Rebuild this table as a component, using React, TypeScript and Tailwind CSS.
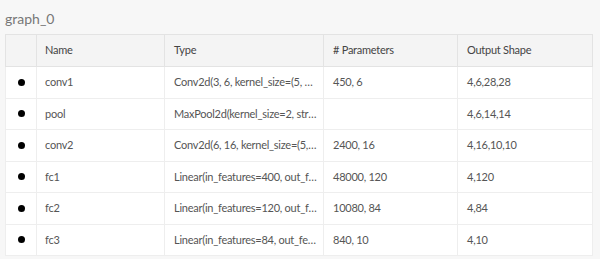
const rows = [
  { name: 'conv1', type: 'Conv2d(3, 6, kernel_size=(5, 5), stride=(1, 1))', params: '450, 6', shape: '4,6,28,28' },
  { name: 'pool', type: 'MaxPool2d(kernel_size=2, stride=2, padding=0, dilation=1, ceil_mode=False)', params: '', shape: '4,6,14,14' },
  { name: 'conv2', type: 'Conv2d(6, 16, kernel_size=(5, 5), stride=(1, 1))', params: '2400, 16', shape: '4,16,10,10' },
  { name: 'fc1', type: 'Linear(in_features=400, out_features=120, bias=True)', params: '48000, 120', shape: '4,120' },
  { name: 'fc2', type: 'Linear(in_features=120, out_features=84, bias=True)', params: '10080, 84', shape: '4,84' },
  { name: 'fc3', type: 'Linear(in_features=84, out_features=10, bias=True)', params: '840, 10', shape: '4,10' },
];

export default function App() {
  return (
    <div className="w-[600px] h-[259px] bg-[#f7f7f7] px-[5px] pt-[9px] overflow-hidden" style={{ fontFamily: 'Lato, "Liberation Sans", sans-serif' }}>
      <h2 className="text-[14px] leading-[20px] text-[#777] mb-[5px]">graph_0</h2>
      <table className="table-fixed w-[588px] border-collapse bg-white border border-[#e3e3e3] text-[11px] tracking-[-0.25px] text-[#555]">
        <colgroup>
          <col className="w-[31px]" />
          <col className="w-[128px]" />
          <col className="w-[159px]" />
          <col className="w-[134px]" />
          <col />
        </colgroup>
        <thead>
          <tr className="h-[32px] bg-[#f4f4f4]">
            <th className="border border-[#e3e3e3]" />
            <th className="border border-[#e3e3e3] text-left font-normal pl-[8px] text-[#444]">Name</th>
            <th className="border border-[#e3e3e3] text-left font-normal pl-[9px] text-[#444]">Type</th>
            <th className="border border-[#e3e3e3] text-left font-normal pl-[9px] text-[#444]"># Parameters</th>
            <th className="border border-[#e3e3e3] text-left font-normal pl-[9px] text-[#444]">Output Shape</th>
          </tr>
        </thead>
        <tbody>
          {rows.map((r) => (
            <tr key={r.name} className="h-[31.5px]">
              <td className="border border-[#eee]">
                <div className="w-[7px] h-[7px] rounded-full bg-black mx-auto" />
              </td>
              <td className="border border-[#eee] pl-[8px]">{r.name}</td>
              <td className="border border-[#eee] pl-[9px] pr-[6px] whitespace-nowrap overflow-hidden text-ellipsis">{r.type}</td>
              <td className="border border-[#eee] pl-[9px]">{r.params}</td>
              <td className="border border-[#eee] pl-[9px]">{r.shape}</td>
            </tr>
          ))}
        </tbody>
      </table>
    </div>
  );
}
